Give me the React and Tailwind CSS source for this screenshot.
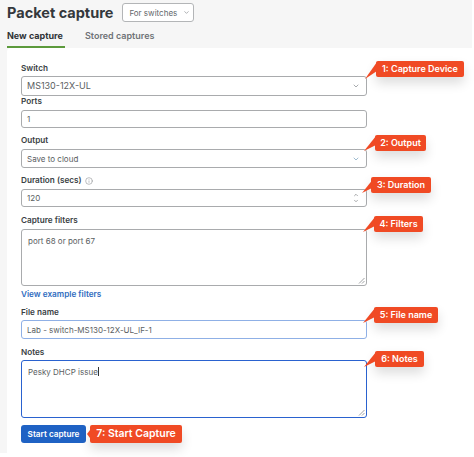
import React from "react";
import { ChevronDown, ChevronUp, Info } from "lucide-react";

const Callout = ({ className, tailClass = "-left-[11px] top-0", points = "12,1 12,10 0,16", children }) => (
  <div className={`absolute flex items-center justify-center h-[16px] rounded-[2px] bg-[#f04a24] text-white text-[9px] font-semibold shadow-[0_6px_12px_rgba(0,0,0,0.14)] ${className}`}>
    <svg className={`absolute w-[12px] h-[18px] ${tailClass}`} viewBox="0 0 12 18">
      <polygon points={points} fill="#f04a24" />
    </svg>
    {children}
  </div>
);

const Label = ({ children, className = "" }) => (
  <div className={`text-[8.2px] leading-[11px] font-semibold text-[#3a3f44] ${className}`}>{children}</div>
);

const Field = ({ className = "", children }) => (
  <div className={`relative flex items-center w-[346px] rounded-[3px] border border-[#a9abad] bg-white pl-[5px] text-[8px] text-[#5a5e62] ${className}`}>
    {children}
  </div>
);

const Resize = () => (
  <svg className="absolute right-[1px] bottom-[1px]" width="7" height="7" viewBox="0 0 7 7">
    <path d="M1 6.5 L6.5 1 M4 6.5 L6.5 4" stroke="#77797c" strokeWidth="0.7" />
  </svg>
);

const App = () => {
  return (
    <div className="relative w-[474px] h-[457px] bg-white overflow-hidden font-['Inter',sans-serif]">
      <div className="w-[472px] h-[48px] bg-[#f6f6f6] pl-[7px] pt-[3px]">
        <div className="flex items-center gap-[9px] h-[19px]">
          <h1 className="text-[14.5px] leading-[19px] font-bold text-[#34383c]">Packet capture</h1>
          <div className="flex items-center gap-[6px] w-[72px] h-[19px] rounded-[3px] border border-[#b3b5b7] bg-white pl-[6px] text-[8px] text-[#63676b]">
            For switches
            <ChevronDown size={7} strokeWidth={2} className="text-[#777b7f]" />
          </div>
        </div>
        <div className="flex gap-[20px] mt-[4px] h-[22px]">
          <div className="w-[58px] h-[22px] pt-[3px] border-b-2 border-[#5c9a3c] text-[9px] leading-[13px] font-bold text-[#2f3337]">New capture</div>
          <div className="pt-[3px] text-[9px] leading-[13px] font-semibold text-[#6f7377]">Stored captures</div>
        </div>
      </div>

      <div className="bg-[#f6f6f6] pl-[7px] h-[405px]">
        <div className="h-full bg-white rounded-tl-[4px] pl-[14px] pt-[15px]">
          <Label>Switch</Label>
          <Field className="h-[20px] mt-[2px] !text-[9px]">
            MS130-12X-UL
            <ChevronDown size={8} strokeWidth={2} className="absolute right-[6px] text-[#7b8085]" />
          </Field>
          <Label>Ports</Label>
          <Field className="h-[18px] mt-[3px]">1</Field>
          <Label className="mt-[7px]">Output</Label>
          <Field className="h-[19px] mt-[3px]">
            Save to cloud
            <ChevronDown size={8} strokeWidth={2} className="absolute right-[6px] text-[#6e9ab8]" />
          </Field>
          <div className="flex items-center gap-[3px] mt-[7px]">
            <Label>Duration (secs)</Label>
            <Info size={8} strokeWidth={1.5} className="text-[#7b7f83]" />
          </div>
          <Field className="h-[18px] mt-[3px]">
            120
            <span className="absolute right-[7px] flex flex-col text-[#54585c]">
              <ChevronUp size={6} strokeWidth={2} />
              <ChevronDown size={6} strokeWidth={2} />
            </span>
          </Field>
          <Label className="mt-[8px]">Capture filters</Label>
          <Field className="h-[57px] mt-[3px] !items-start pt-[5px] !pl-[6px]">
            port 68 or port 67
            <Resize />
          </Field>
          <div className="mt-[3px] text-[8.2px] leading-[11px] font-semibold text-[#2f6cc0]">View example filters</div>
          <Label className="mt-[7px]">File name</Label>
          <Field className="h-[19px] mt-[2px] !border-[#8fb0e6]">Lab - switch-MS130-12X-UL_IF-1</Field>
          <Label className="mt-[8px]">Notes</Label>
          <Field className="h-[58px] mt-[2px] !items-start pt-[5px] !pl-[6px] !border-[#2a62cf] border-[1.5px]">
            <span>Pesky DHCP issue<span className="inline-block w-px h-[9px] align-[-1px] bg-[#333]" /></span>
            <Resize />
          </Field>
          <div className="flex items-center gap-[4px] mt-[7px]">
            <button className="w-[65px] h-[18px] rounded-[3px] bg-[#1f62c4] text-white text-[8.2px] font-semibold">Start capture</button>
            <div className="relative flex items-center justify-center w-[92px] h-[18px] rounded-[2px] bg-[#f04a24] text-white text-[10.5px] font-semibold shadow-[0_6px_12px_rgba(0,0,0,0.14)]">
              <span className="absolute -left-[3px] top-[5px] border-y-[4px] border-r-[3px] border-y-transparent border-r-[#f04a24]" />
              7: Start Capture
            </div>
          </div>
        </div>
      </div>

      <Callout className="left-[376px] top-[61px] w-[88px]" points="12,1 12,10 0,18">1: Capture Device</Callout>
      <Callout className="left-[375px] top-[135px] w-[51px]">2: Output</Callout>
      <Callout className="left-[371px] top-[177px] w-[60px]" tailClass="-left-[9px] top-0">3: Duration</Callout>
      <Callout className="left-[374px] top-[216px] w-[49px]">4: Filters</Callout>
      <Callout className="left-[374px] top-[307px] w-[64px]">5: File name</Callout>
      <Callout className="left-[375px] top-[351px] w-[49px]">6: Notes</Callout>
    </div>
  );
};

export default App;
